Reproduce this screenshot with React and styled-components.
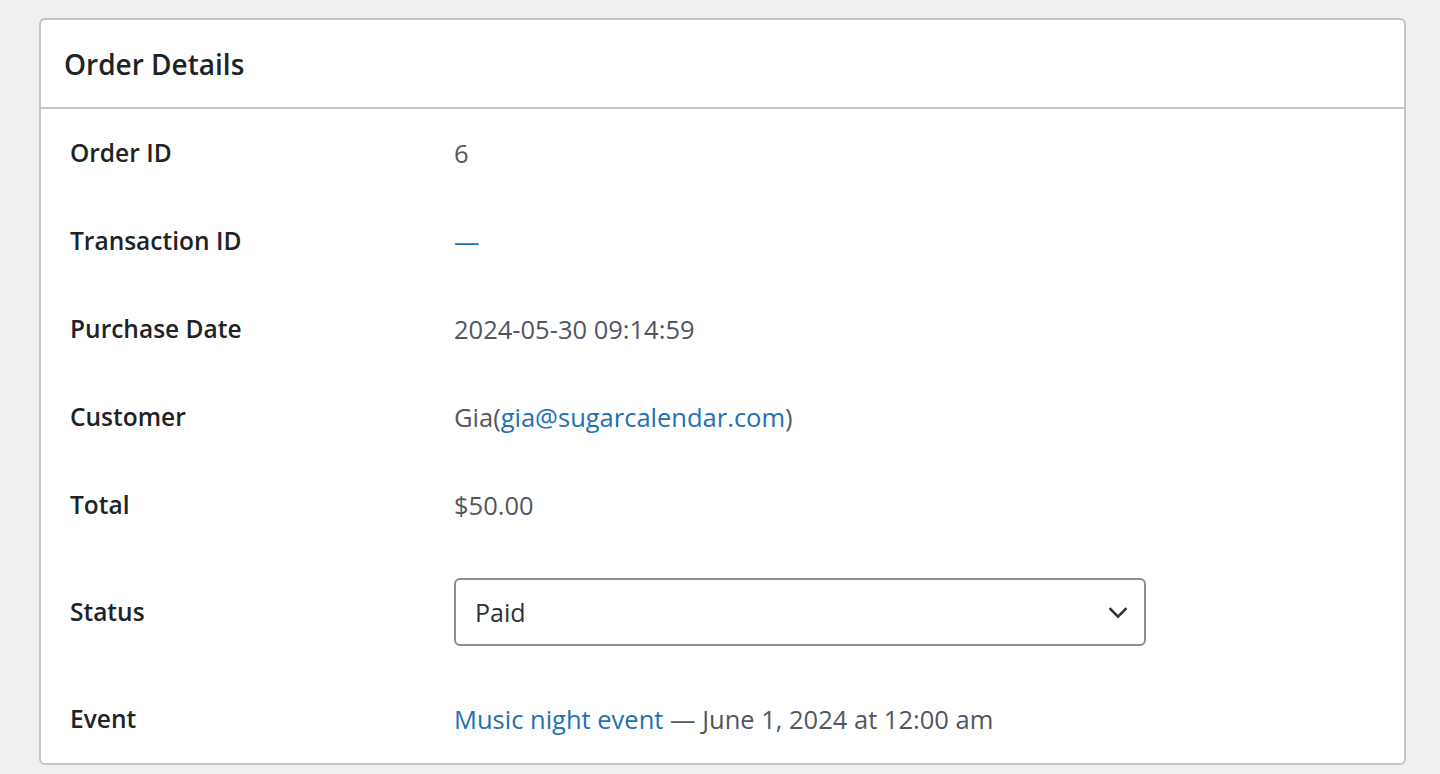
import React from 'react';
import styled, { createGlobalStyle } from "styled-components"

const getRows = () => [
    { label: "Order ID", value: <Value>6</Value> },
    { label: "Transaction ID", value: <Value><Link href="#">—</Link></Value> },
    { label: "Purchase Date", value: <Value>2024-05-30 09:14:59</Value> },
    { label: "Customer", value: <Value>Gia(<Link href="#">gia@sugarcalendar.com</Link>)</Value> },
    { label: "Total", value: <Value>$50.00</Value> },
    { label: "Status", value: <StatusSelect /> },
    { label: "Event", value: <Value><Link href="#">Music night event</Link> — June 1, 2024 at 12:00 am</Value> },
]

function StatusSelect() {
    return (
        <SelectBox>
            <span>Paid</span>
            <svg width="26" height="26" viewBox="0 0 20 20">
                <path d="M3.5 7 L10 13.5 L16.5 7" fill="none" stroke="#2c3338" strokeWidth="2" />
            </svg>
        </SelectBox>
    )
}

const App = () => (
    <Page>
        <GlobalStyle />
        <Card>
            <Header>
                <Title>Order Details</Title>
            </Header>
            <Table>
                {getRows().map((r) => (
                    <Row key={r.label}>
                        <Label>{r.label}</Label>
                        <Cell>{r.value}</Cell>
                    </Row>
                ))}
            </Table>
        </Card>
    </Page>
)

const GlobalStyle = createGlobalStyle`
body {
    margin: 0;
    background: #f0f0f1;
    font-family: "Open Sans", "Noto Sans", sans-serif;
}
`

const Page = styled.div`
padding: 18px 34px 8px 39px;
`

const Card = styled.div`
background: #fff;
border: 2px solid #c3c4c7;
border-radius: 6px;
box-sizing: border-box;
`

const Header = styled.div`
height: 87px;
display: flex;
align-items: center;
padding: 0 23px;
border-bottom: 2px solid #c3c4c7;
`

const Title = styled.h2`
margin: 0;
font-size: 28px;
font-weight: 600;
color: #1d2327;
`

const Table = styled.div`
display: flex;
flex-direction: column;
padding: 0 29px;
`

const Row = styled.div`
display: grid;
grid-template-columns: 384px 1fr;
align-items: center;
padding: 29px 0;
`

const Label = styled.div`
font-size: 24.5px;
font-weight: 600;
line-height: 30px;
color: #1d2327;
`

const Cell = styled.div`
display: flex;
align-items: center;
`

const Value = styled.div`
font-size: 25.5px;
line-height: 30px;
color: #50575e;
`

const Link = styled.a`
color: #2271b1;
text-decoration: none;
`

const SelectBox = styled.div`
width: 692px;
height: 68px;
box-sizing: border-box;
border: 2px solid #8c8f94;
border-radius: 6px;
display: flex;
align-items: center;
justify-content: space-between;
padding: 0 13px 0 19px;
font-size: 25px;
color: #2c3338;
`

export default App
